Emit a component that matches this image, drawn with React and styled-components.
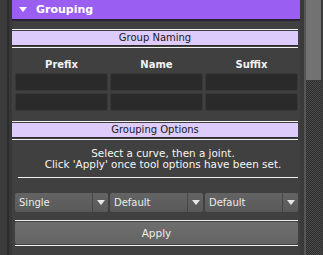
import React from 'react';
import styled, { createGlobalStyle } from 'styled-components';

const GlobalStyle = createGlobalStyle`
  html, body {
    margin: 0;
    padding: 0;
    background: #3d3d3d;
  }
  body {
    font-family: "DejaVu Sans", "Liberation Sans", sans-serif;
  }
`;

const Frame = styled.div`
  display: flex;
  width: 323px;
  height: 255px;
  overflow: hidden;
  background: #404040;
`;

const LeftRail = styled.div`
  width: 12px;
  flex: none;
  background: linear-gradient(
    to right,
    #3b3b3b 0,
    #3b3b3b 7px,
    #2b2b2b 7px,
    #2b2b2b 9px,
    #383838 9px
  );
`;

const Main = styled.div`
  width: 288px;
  flex: none;
  display: flex;
  flex-direction: column;
`;

const Header = styled.div`
  height: 19px;
  flex: none;
  display: flex;
  align-items: center;
  gap: 9px;
  padding-left: 7px;
  background: #9a5ff2;
  border-bottom: 2px solid #2b2139;
  color: #fff;
  font-weight: bold;
  font-size: 11px;
`;

const Caret = styled.span`
  width: 0;
  height: 0;
  border-left: 4px solid transparent;
  border-right: 4px solid transparent;
  border-top: 5px solid #fff;
`;

const Body = styled.div`
  display: flex;
  flex-direction: column;
  padding: 8px 2px 0 0;
`;

const SectionTitle = styled.div`
  border-top: 1px solid #f2f2f2;
  border-bottom: 1px solid #f2f2f2;
  padding: 1px 0;
  margin-top: ${(p) => p.$top || 0}px;

  & > div {
    height: 14px;
    background: #dccbfb;
    border-bottom: 1px solid #2c2c2c;
    color: #1a1a1a;
    font-size: 10px;
    line-height: 14px;
    text-align: center;
  }
`;

const Grid = styled.div`
  display: grid;
  grid-template-columns: repeat(3, 93px);
  column-gap: 2px;
  row-gap: 2px;
  padding-left: 3px;
  margin-top: ${(p) => p.$top || 0}px;
`;

const ColLabel = styled.div`
  color: #f2f2f2;
  font-weight: bold;
  font-size: 10px;
  line-height: 12px;
  text-align: center;
`;

const Field = styled.div`
  height: 16px;
  background: #2a2a2a;
  border: 1px solid #373737;
  border-radius: 2px;
`;

const Hint = styled.div`
  margin-top: 8px;
  color: #f6f6f6;
  font-size: 10.4px;
  line-height: 11px;
  text-align: center;
  padding-left: 16px;
`;

const Rule = styled.div`
  height: 1px;
  background: #f2f2f2;
  margin-left: ${(p) => p.$indent || 0}px;
  margin-top: ${(p) => p.$top || 0}px;
`;

const Select = styled.div`
  height: 19px;
  display: flex;
  background: linear-gradient(#646464, #595959);
  border-radius: 2px;
  color: #ececec;
  font-size: 10px;
`;

const SelectText = styled.div`
  flex: 1;
  line-height: 19px;
  padding-left: 4px;
`;

const SelectArrow = styled.div`
  width: 15px;
  display: flex;
  align-items: center;
  justify-content: center;
  border-left: 1px solid #454545;

  &::after {
    content: '';
    border-left: 4px solid transparent;
    border-right: 4px solid transparent;
    border-top: 5px solid #e8e8e8;
  }
`;

const ApplyWrap = styled.div`
  margin: 8px 0 0 3px;
  border-top: 1px solid #f2f2f2;
  border-bottom: 1px solid #f2f2f2;
  padding: 1px 0;
`;

const ApplyButton = styled.div`
  height: 22px;
  background: linear-gradient(#6e6e6e, #646464);
  border-radius: 2px;
  color: #ececec;
  font-size: 10.5px;
  line-height: 22px;
  text-align: center;
`;

const Scroll = styled.div`
  width: 23px;
  flex: none;
  display: flex;
  background: #3a3a3a;
  padding-left: 4px;
  box-sizing: border-box;
`;

const Track = styled.div`
  width: 15px;
  display: flex;
  flex-direction: column;
  border-left: 2px solid #555;
  background-color: #3c3c3c;
  background-image: repeating-conic-gradient(#2e2e2e 0 25%, #4a4a4a 0 50%);
  background-size: 2px 2px;
`;

const Thumb = styled.div`
  height: 80px;
  background: #727272;
  border-bottom: 1px solid #3a3a3a;
`;

const selects = ['Single', 'Default', 'Default'];

export default function App() {
  return (
    <>
      <GlobalStyle />
      <Frame>
        <LeftRail />
        <Main>
          <Header>
            <Caret />
            Grouping
          </Header>
          <Body>
            <SectionTitle>
              <div>Group Naming</div>
            </SectionTitle>
            <Grid $top={11}>
              <ColLabel>Prefix</ColLabel>
              <ColLabel>Name</ColLabel>
              <ColLabel>Suffix</ColLabel>
              {Array.from({ length: 6 }).map((_, i) => (
                <Field key={i} />
              ))}
            </Grid>
            <SectionTitle $top={10}>
              <div>Grouping Options</div>
            </SectionTitle>
            <Hint>
              Select a curve, then a joint.
              <br />
              Click 'Apply' once tool options have been set.
            </Hint>
            <Rule $indent={6} $top={7} />
            <Grid $top={15}>
              {selects.map((s, i) => (
                <Select key={i}>
                  <SelectText>{s}</SelectText>
                  <SelectArrow />
                </Select>
              ))}
            </Grid>
            <ApplyWrap>
              <ApplyButton>Apply</ApplyButton>
            </ApplyWrap>
          </Body>
        </Main>
        <Scroll>
          <Track>
            <Thumb />
          </Track>
        </Scroll>
      </Frame>
    </>
  );
}
